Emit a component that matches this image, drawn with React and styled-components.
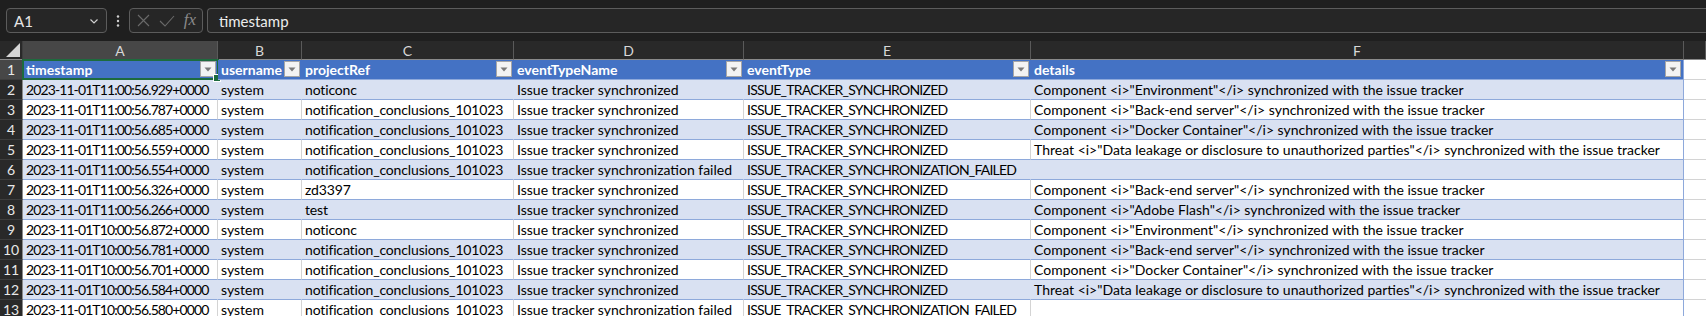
import React from "react";
import styled, { createGlobalStyle } from "styled-components";

const GlobalStyle = createGlobalStyle`
  html, body { margin: 0; padding: 0; background: #1f1f1f; }
  body { font-family: "Lato", "Liberation Sans", sans-serif; overflow: hidden; }
  * { box-sizing: border-box; }
`;

const COLS = [
  { letter: "A", width: 195, name: "timestamp", tight: -0.9 },
  { letter: "B", width: 84, name: "username", tight: 0 },
  { letter: "C", width: 212, name: "projectRef", tight: -0.15 },
  { letter: "D", width: 230, name: "eventTypeName", tight: 0 },
  { letter: "E", width: 287, name: "eventType", tight: -0.78 },
  { letter: "F", width: 653, name: "details", tight: 0 },
];

const SYNC = "Issue tracker synchronized";
const FAIL = "Issue tracker synchronization failed";
const SYNC_T = "ISSUE_TRACKER_SYNCHRONIZED";
const FAIL_T = "ISSUE_TRACKER_SYNCHRONIZATION_FAILED";
const NC = "notification_conclusions_101023";
const comp = (n) => `Component <i>"${n}"</i> synchronized with the issue tracker`;
const THREAT = `Threat <i>"Data leakage or disclosure to unauthorized parties"</i> synchronized with the issue tracker`;

const ROWS = [
  ["2023-11-01T11:00:56.929+0000", "system", "noticonc", SYNC, SYNC_T, comp("Environment")],
  ["2023-11-01T11:00:56.787+0000", "system", NC, SYNC, SYNC_T, comp("Back-end server")],
  ["2023-11-01T11:00:56.685+0000", "system", NC, SYNC, SYNC_T, comp("Docker Container")],
  ["2023-11-01T11:00:56.559+0000", "system", NC, SYNC, SYNC_T, THREAT],
  ["2023-11-01T11:00:56.554+0000", "system", NC, FAIL, FAIL_T, ""],
  ["2023-11-01T11:00:56.326+0000", "system", "zd3397", SYNC, SYNC_T, comp("Back-end server")],
  ["2023-11-01T11:00:56.266+0000", "system", "test", SYNC, SYNC_T, comp("Adobe Flash")],
  ["2023-11-01T10:00:56.872+0000", "system", "noticonc", SYNC, SYNC_T, comp("Environment")],
  ["2023-11-01T10:00:56.781+0000", "system", NC, SYNC, SYNC_T, comp("Back-end server")],
  ["2023-11-01T10:00:56.701+0000", "system", NC, SYNC, SYNC_T, comp("Docker Container")],
  ["2023-11-01T10:00:56.584+0000", "system", NC, SYNC, SYNC_T, THREAT],
  ["2023-11-01T10:00:56.580+0000", "system", NC, FAIL, FAIL_T, ""],
];

const TEMPLATE = `23px ${COLS.map((c) => c.width + "px").join(" ")} 1fr`;

/* ---------- formula bar ---------- */
const TopBar = styled.div`
  display: flex;
  align-items: center;
  gap: 4px;
  height: 41px;
  padding: 8px 0 8px 6px;
  background: #1f1f1f;
`;

const Box = styled.div`
  height: 25px;
  border: 1px solid #5c5c5c;
  border-radius: 4px;
  background: #262626;
  display: flex;
  align-items: center;
`;

const NameBox = styled(Box)`
  width: 101px;
  padding: 0 6px 0 7px;
  justify-content: space-between;
  color: #e6e6e6;
  font-size: 15px;
`;

const Kebab = styled.div`
  width: 14px;
  display: flex;
  justify-content: center;
`;

const FxBox = styled(Box)`
  width: 74px;
  padding: 0 6px 0 7px;
  justify-content: space-between;
  color: #6e6e6e;
`;

const Fx = styled.span`
  font-family: "Liberation Serif", serif;
  font-style: italic;
  font-size: 17px;
  color: #8a8a8a;
  margin-top: -2px;
`;

const FormulaBox = styled(Box)`
  flex: 1;
  padding-left: 11px;
  border-radius: 4px 0 0 4px;
  border-right: none;
  color: #ececec;
  font-size: 15px;
`;

/* ---------- grid ---------- */
const Sheet = styled.div`
  display: grid;
  grid-template-columns: ${TEMPLATE};
  grid-auto-rows: 20px;
  grid-template-rows: 19px;
  background: #ffffff;
`;

const Corner = styled.div`
  background: #292929;
  border-right: 1px solid #3d3d3d;
  border-bottom: 1px solid #8a8a8a;
  display: flex;
  align-items: flex-end;
  justify-content: flex-end;
  padding: 0 2px 2px 0;
`;

const ColHead = styled.div`
  background: ${(p) => (p.$active ? "#474747" : "#292929")};
  border-right: 1px solid #5a5a5a;
  border-bottom: 1px solid ${(p) => (p.$active ? "#a8a8a8" : "#8a8a8a")};
  color: #d8d8d8;
  font-size: 14px;
  display: flex;
  align-items: center;
  justify-content: center;
  padding-top: 1px;
`;

const RowHead = styled.div`
  background: ${(p) => (p.$active ? "#474747" : "#292929")};
  border-bottom: 1px solid #3d3d3d;
  border-right: 1px solid ${(p) => (p.$active ? "#a8a8a8" : "#8a8a8a")};
  color: #e8e8e8;
  font-size: 14px;
  display: flex;
  align-items: center;
  justify-content: center;
`;

const HeadCell = styled.div`
  position: relative;
  background: #4472c4;
  border-bottom: 1px solid #8ea9db;
  color: #ffffff;
  font-weight: 700;
  font-size: 14px;
  display: flex;
  align-items: flex-end;
  justify-content: space-between;
  padding: 0 2px 1px 3px;
  white-space: nowrap;
  ${(p) => p.$last && "border-right: 1px solid #8ea9db;"}
`;

const Selection = styled.div`
  position: absolute;
  inset: -1px -1px -1px -1px;
  border: 2px solid #1d6b3e;
  pointer-events: none;
  &::after {
    content: "";
    position: absolute;
    right: -4px;
    bottom: -4px;
    width: 6px;
    height: 6px;
    background: #1d6b3e;
    border: 1px solid #ffffff;
  }
`;

const FilterBtn = styled.div`
  width: 16px;
  height: 16px;
  margin-bottom: 1px;
  background: #f3f3f3;
  border: 1px solid #a6a6a6;
  display: flex;
  align-items: center;
  justify-content: center;
  flex: none;
`;

const Cell = styled.div`
  background: ${(p) => (p.$band ? "#d9e1f2" : "#ffffff")};
  border-bottom: 1px solid #8ea9db;
  border-right: 1px solid ${(p) => (p.$last ? "#8ea9db" : p.$band ? "#d9e1f2" : "#d4d4d4")};
  color: #000000;
  font-size: 14px;
  letter-spacing: ${(p) => p.$tight}px;
  line-height: 16px;
  display: flex;
  align-items: flex-end;
  padding: 0 0 1px 3px;
  white-space: nowrap;
  overflow: hidden;
  min-width: 0;
`;

const Outside = styled.div`
  background: #ffffff;
  border-bottom: 1px solid #d4d4d4;
`;

function FilterIcon() {
  return (
    <FilterBtn>
      <svg width="8" height="5" viewBox="0 0 8 5">
        <path d="M0.5 0.5 L7.5 0.5 L4 4.5 Z" fill="#7a7a7a" />
      </svg>
    </FilterBtn>
  );
}

export default function App() {
  return (
    <>
      <GlobalStyle />
      <TopBar>
        <NameBox>
          <span>A1</span>
          <svg width="12" height="12" viewBox="0 0 12 12">
            <path d="M2.5 4.5 L6 8 L9.5 4.5" fill="none" stroke="#cfcfcf" strokeWidth="1.2" />
          </svg>
        </NameBox>
        <Kebab>
          <svg width="4" height="14" viewBox="0 0 4 14">
            <circle cx="2" cy="2.5" r="1.2" fill="#cfcfcf" />
            <circle cx="2" cy="7" r="1.2" fill="#cfcfcf" />
            <circle cx="2" cy="11.5" r="1.2" fill="#cfcfcf" />
          </svg>
        </Kebab>
        <FxBox>
          <svg width="13" height="13" viewBox="0 0 13 13">
            <path d="M1 1 L12 12 M12 1 L1 12" stroke="#6a6a6a" strokeWidth="1.1" />
          </svg>
          <svg width="16" height="12" viewBox="0 0 16 12">
            <path d="M1 6 L6 11 L15 1" fill="none" stroke="#6a6a6a" strokeWidth="1.1" />
          </svg>
          <Fx>fx</Fx>
        </FxBox>
        <FormulaBox>timestamp</FormulaBox>
      </TopBar>
      <Sheet>
        <Corner>
          <svg width="14" height="14" viewBox="0 0 14 14">
            <path d="M14 0 L14 14 L0 14 Z" fill="#d6d6d6" />
          </svg>
        </Corner>
        {COLS.map((c, i) => (
          <ColHead key={c.letter} $active={i === 0}>{c.letter}</ColHead>
        ))}
        <ColHead />

        <RowHead $active>1</RowHead>
        {COLS.map((c, i) => (
          <HeadCell key={c.name} $last={i === COLS.length - 1}>
            <span>{c.name}</span>
            <FilterIcon />
            {i === 0 && <Selection />}
          </HeadCell>
        ))}
        <Outside />

        {ROWS.map((row, r) => (
          <React.Fragment key={r}>
            <RowHead>{r + 2}</RowHead>
            {row.map((v, ci) => (
              <Cell
                key={ci}
                $band={r % 2 === 0}
                $last={ci === row.length - 1}
                $tight={COLS[ci].tight}
              >
                {v}
              </Cell>
            ))}
            <Outside />
          </React.Fragment>
        ))}
      </Sheet>
    </>
  );
}
